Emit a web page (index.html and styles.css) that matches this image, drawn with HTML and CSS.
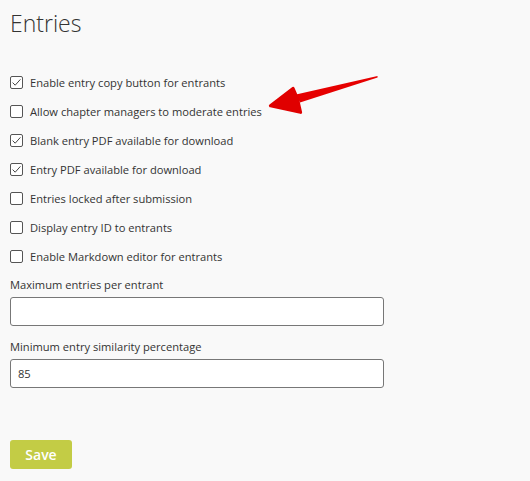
FILE: index.html
```html
<!DOCTYPE html>
<html>
<head>
<meta charset="utf-8">
<link rel="stylesheet" href="styles.css">
</head>
<body>
<div class="page">
  <h1 class="title">Entries</h1>
  <div class="checks">
    <label class="check"><span class="box on"><svg viewBox="0 0 13 13" width="13" height="13"><path d="M2.6 6.6 L5.2 9.2 L10.4 3.4" fill="none" stroke="#444" stroke-width="1"/></svg></span>Enable entry copy button for entrants</label>
    <label class="check"><span class="box"></span>Allow chapter managers to moderate entries</label>
    <label class="check"><span class="box on"><svg viewBox="0 0 13 13" width="13" height="13"><path d="M2.6 6.6 L5.2 9.2 L10.4 3.4" fill="none" stroke="#444" stroke-width="1"/></svg></span>Blank entry PDF available for download</label>
    <label class="check"><span class="box on"><svg viewBox="0 0 13 13" width="13" height="13"><path d="M2.6 6.6 L5.2 9.2 L10.4 3.4" fill="none" stroke="#444" stroke-width="1"/></svg></span>Entry PDF available for download</label>
    <label class="check"><span class="box"></span>Entries locked after submission</label>
    <label class="check"><span class="box"></span>Display entry ID to entrants</label>
    <label class="check"><span class="box"></span>Enable Markdown editor for entrants</label>
  </div>
  <div class="field">
    <div class="field-label">Maximum entries per entrant</div>
    <div class="input"></div>
  </div>
  <div class="field">
    <div class="field-label">Minimum entry similarity percentage</div>
    <div class="input">85</div>
  </div>
  <div class="actions">
    <button class="save">Save</button>
  </div>
  <svg class="arrow" width="530" height="130" viewBox="0 0 530 130">
    <path d="M377.5 76 L377.6 77.6 L300 102.5 L296 94.5 Z" fill="#e60000"/>
    <path d="M293 88.5 L270.5 105.8 L300.5 112.3 L297.5 99 Z" fill="#e00000" stroke="#e00000" stroke-width="3.2" stroke-linejoin="round"/>
  </svg>
</div>
</body>
</html>
```
FILE: styles.css
```css
* { box-sizing: border-box; }
html, body { margin: 0; padding: 0; }
body {
  background: #f9f9f9;
  font-family: "Open Sans", "Liberation Sans", sans-serif;
  color: #333;
  width: 530px;
  height: 481px;
  overflow: hidden;
}
.page {
  position: relative;
  padding: 8px 10px 0 10px;
}
.title {
  margin: 0;
  font-weight: 300;
  font-size: 23px;
  line-height: 30px;
  color: #333;
}
.checks {
  margin-top: 36px;
  display: flex;
  flex-direction: column;
  gap: 13px;
}
.check {
  display: flex;
  align-items: center;
  height: 16px;
  font-size: 11.15px;
  color: #333;
}
.box {
  width: 13px;
  height: 13px;
  border: 1px solid #555;
  border-radius: 2px;
  background: #fff;
  margin-right: 7px;
  margin-left: 0;
  position: relative;
  flex: none;
}
.box svg { position: absolute; left: -1px; top: -1px; }
.field { margin-top: 13px; }
.field + .field { margin-top: 13px; }
.field-label {
  font-size: 11.15px;
  line-height: 16px;
  margin-bottom: 4px;
}
.input {
  width: 374px;
  height: 29px;
  border: 1px solid #777;
  border-radius: 3px;
  background: #fff;
  font-size: 11.15px;
  line-height: 27px;
  padding-left: 7px;
}
.actions { margin-top: 52px; }
.save {
  width: 62px;
  height: 29px;
  border: none;
  border-radius: 3px;
  background: #c3cc45;
  color: #fff;
  font-family: "Open Sans", "Liberation Sans", sans-serif;
  font-size: 14px;
  font-weight: 600;
  padding: 0;
}
.arrow {
  position: absolute;
  left: 0;
  top: 0;
  pointer-events: none;
}
```
